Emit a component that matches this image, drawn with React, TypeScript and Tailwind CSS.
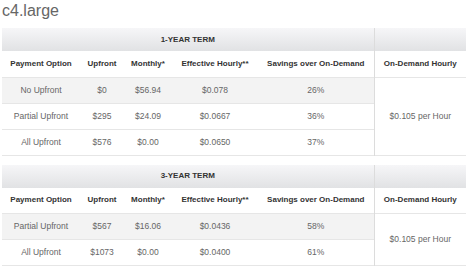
const termData = [
  {
    term: '1-YEAR TERM',
    onDemand: '$0.105 per Hour',
    rows: [
      ['No Upfront', '$0', '$56.94', '$0.078', '26%'],
      ['Partial Upfront', '$295', '$24.09', '$0.0667', '36%'],
      ['All Upfront', '$576', '$0.00', '$0.0650', '37%'],
    ],
  },
  {
    term: '3-YEAR TERM',
    onDemand: '$0.105 per Hour',
    rows: [
      ['Partial Upfront', '$567', '$16.06', '$0.0436', '58%'],
      ['All Upfront', '$1073', '$0.00', '$0.0400', '61%'],
    ],
  },
]

const headers = ['Payment Option', 'Upfront', 'Monthly*', 'Effective Hourly**', 'Savings over On-Demand']

function TermTable({ term, onDemand, rows }: { term: string; onDemand: string; rows: string[][] }) {
  return (
    <table className="w-[464px] table-fixed border-collapse text-[8px] leading-none">
      <colgroup>
        <col className="w-[78px]" />
        <col className="w-[44px]" />
        <col className="w-[48px]" />
        <col className="w-[86px]" />
        <col className="w-[116px]" />
        <col className="w-[92px]" />
      </colgroup>
      <thead>
        <tr className="h-[23px] bg-gradient-to-b from-[#f6f6f8] to-[#e1e2e4]">
          <th colSpan={5} className="font-bold text-[#333] text-center">{term}</th>
          <th className="border-l border-[#dcdcdc]"></th>
        </tr>
        <tr className="h-[26px] bg-white border-b border-[#e6e6e6]">
          {headers.map((h) => (
            <th key={h} className="font-bold text-[#333] text-center">{h}</th>
          ))}
          <th className="font-bold text-[#333] text-center border-l border-[#dcdcdc]">On-Demand Hourly</th>
        </tr>
      </thead>
      <tbody>
        {rows.map((r, i) => (
          <tr
            key={i}
            className={`h-[26px] border-b border-[#e6e6e6] ${i === 0 ? 'bg-[#f3f3f3]' : 'bg-white'}`}
          >
            {r.map((c, j) => (
              <td key={j} className="text-center text-[8.5px] text-[#666]">{c}</td>
            ))}
            {i === 0 && (
              <td rowSpan={rows.length} className="bg-white text-center text-[8.5px] text-[#666] border-l border-[#dcdcdc]">
                {onDemand}
              </td>
            )}
          </tr>
        ))}
      </tbody>
    </table>
  )
}

export default function App() {
  return (
    <div className="w-[474px] h-[274px] bg-white px-[2px] font-['Liberation_Sans',Arial,sans-serif]">
      <div className="h-[28px] pt-[1px] text-[16px] leading-[20px] text-[#666]">c4.large</div>
      <TermTable {...termData[0]} />
      <div className="h-[9px]" />
      <TermTable {...termData[1]} />
    </div>
  )
}
